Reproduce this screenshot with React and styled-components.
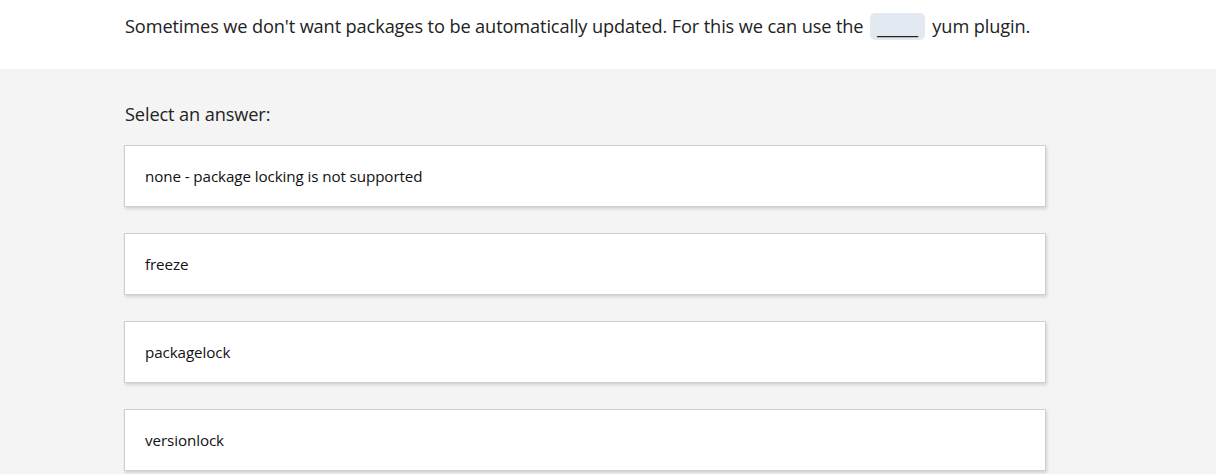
import React from "react";
import styled, { createGlobalStyle } from "styled-components";

const Global = createGlobalStyle`
  html, body { margin: 0; padding: 0; }
  body { font-family: "Open Sans", "Noto Sans", sans-serif; color: #1f1f1f; background: #f4f4f4; }
`;

const Page = styled.div`
  display: flex;
  flex-direction: column;
  min-height: 474px;
`;

const QuestionBar = styled.div`
  background: #ffffff;
  height: 69px;
  display: flex;
  align-items: center;
  padding-left: 125px;
  padding-bottom: 16px;
  box-sizing: border-box;
`;

const Question = styled.p`
  margin: 0;
  font-size: 18.2px;
  line-height: 28px;
  color: #222;
  letter-spacing: -0.12px;
`;

const Blank = styled.span`
  display: inline-block;
  background: #e3e9f0;
  border-radius: 5px;
  padding: 0 7px;
  margin: 0 3px 0 2px;
  line-height: 27px;
  font-size: 19.5px;
  letter-spacing: -0.4px;
  vertical-align: middle;
  position: relative;
  top: -1px;
`;

const Body = styled.div`
  padding: 31px 0 0 124px;
  display: flex;
  flex-direction: column;
`;

const Prompt = styled.div`
  font-size: 18.2px;
  color: #222;
  line-height: 28px;
  margin-left: 1px;
  margin-bottom: 17px;
  letter-spacing: -0.12px;
`;

const Options = styled.div`
  display: flex;
  flex-direction: column;
  gap: 26px;
  width: 922px;
`;

const Option = styled.button`
  all: unset;
  box-sizing: border-box;
  height: 62px;
  background: #fff;
  border: 1px solid #cfcfcf;
  box-shadow: 1px 2px 3px rgba(0, 0, 0, 0.14);
  display: flex;
  align-items: center;
  padding-left: 20px;
  font-size: 15.2px;
  color: #111;
  font-family: "Open Sans", "Noto Sans", sans-serif;
  letter-spacing: -0.1px;
  cursor: pointer;
`;

const answers = [
  "none - package locking is not supported",
  "freeze",
  "packagelock",
  "versionlock",
];

export default function App() {
  return (
    <>
      <Global />
      <Page>
        <QuestionBar>
          <Question>
            Sometimes we don't want packages to be automatically updated. For this we can use the{" "}
            <Blank>_____</Blank> yum plugin.
          </Question>
        </QuestionBar>
        <Body>
          <Prompt>Select an answer:</Prompt>
          <Options>
            {answers.map((a) => (
              <Option key={a}>{a}</Option>
            ))}
          </Options>
        </Body>
      </Page>
    </>
  );
}
